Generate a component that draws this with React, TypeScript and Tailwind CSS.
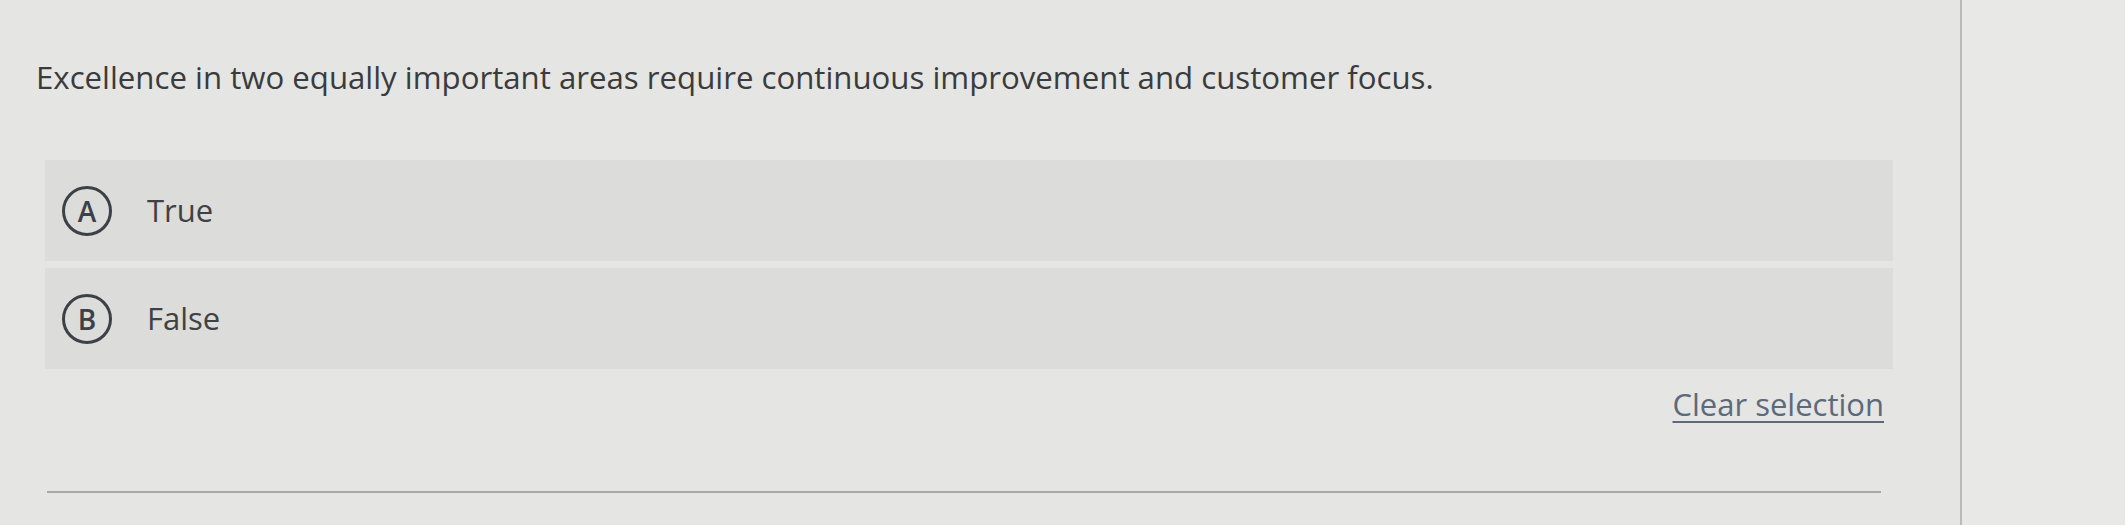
import * as React from "react";

type Choice = { key: string; label: string };

const choices: Choice[] = [
  { key: "A", label: "True" },
  { key: "B", label: "False" },
];

const ChoiceRow: React.FC<{ choice: Choice }> = ({ choice }) => (
  <label className="flex h-[101px] items-center bg-[#dcdcda] pl-[17px] cursor-pointer">
    <span className="flex h-[50px] w-[50px] items-center justify-center rounded-full border-[3px] border-[#3c4047] text-[28px] font-semibold text-[#3c4047]">
      {choice.key}
    </span>
    <span className="ml-[35px] text-[31px] text-[#3f4144]">{choice.label}</span>
  </label>
);

export default function App() {
  return (
    <div
      className="flex h-[525px] w-[2125px] bg-[#e5e5e3] overflow-hidden"
      style={{ fontFamily: '"Open Sans", "Liberation Sans", sans-serif' }}
    >
      <div className="w-[1960px] pl-[36px] pr-[67px] pt-[56px]">
        <p className="text-[31.2px] leading-[42px] text-[#3a3b3d]">
          Excellence in two equally important areas require continuous improvement and customer focus.
        </p>

        <div className="mt-[62px] ml-[9px] flex flex-col gap-[7px]">
          {choices.map((c) => (
            <ChoiceRow key={c.key} choice={c} />
          ))}
        </div>

        <div className="mt-[12px] flex justify-end pr-[9px]">
          <button className="text-[31px] text-[#5c6a7c] underline decoration-2 underline-offset-[5px]">
            Clear selection
          </button>
        </div>

        <div className="mt-[63px] ml-[11px] mr-[12px] h-[2px] bg-[#a8a8aa]" />
      </div>

      <div className="flex-1 border-l-2 border-[#b9b9bb] bg-[#e8e8e6]" />
    </div>
  );
}
